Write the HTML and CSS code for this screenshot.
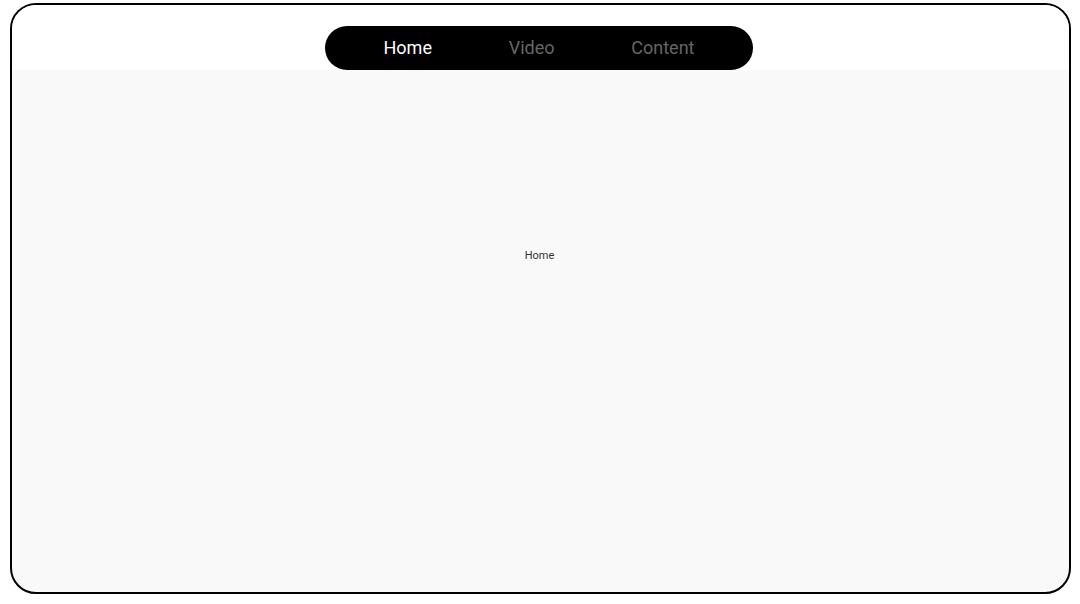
FILE: index.html
```html
<!DOCTYPE html>
<html>
<head>
<meta charset="utf-8">
<link rel="stylesheet" href="styles.css">
</head>
<body>
<div class="frame">
  <header class="header">
    <nav class="tabs">
      <span class="tab active">Home</span>
      <span class="tab">Video</span>
      <span class="tab">Content</span>
    </nav>
  </header>
  <main class="content">
    <p class="label">Home</p>
  </main>
</div>
</body>
</html>
```
FILE: styles.css
```css
html, body {
  margin: 0;
  padding: 0;
  background: #ffffff;
  font-family: Roboto, "Liberation Sans", sans-serif;
}
.frame {
  box-sizing: border-box;
  width: 1061px;
  height: 591px;
  margin: 3px 0 0 10px;
  border: 2px solid #000;
  border-radius: 26px;
  overflow: hidden;
  display: flex;
  flex-direction: column;
  background: #f9f9f9;
}
.header {
  height: 65px;
  background: #ffffff;
  display: flex;
  justify-content: center;
  align-items: flex-start;
  padding-top: 21px;
  box-sizing: border-box;
  flex: none;
}
.tabs {
  height: 44px;
  width: 428px;
  box-sizing: border-box;
  background: #000;
  border-radius: 22px;
  display: flex;
  align-items: center;
  justify-content: space-between;
  padding: 0 58px 0 59px;
  margin-left: -4px;
}
.tab {
  font-size: 18px;
  color: #666666;
  line-height: 44px;
}
.tab.active {
  color: #ffffff;
}
.content {
  flex: 1;
  display: flex;
  justify-content: center;
  padding-top: 179px;
}
.label {
  margin: 0;
  font-size: 11px;
  line-height: 13px;
  color: #333;
  margin-left: -2px;
}
```
